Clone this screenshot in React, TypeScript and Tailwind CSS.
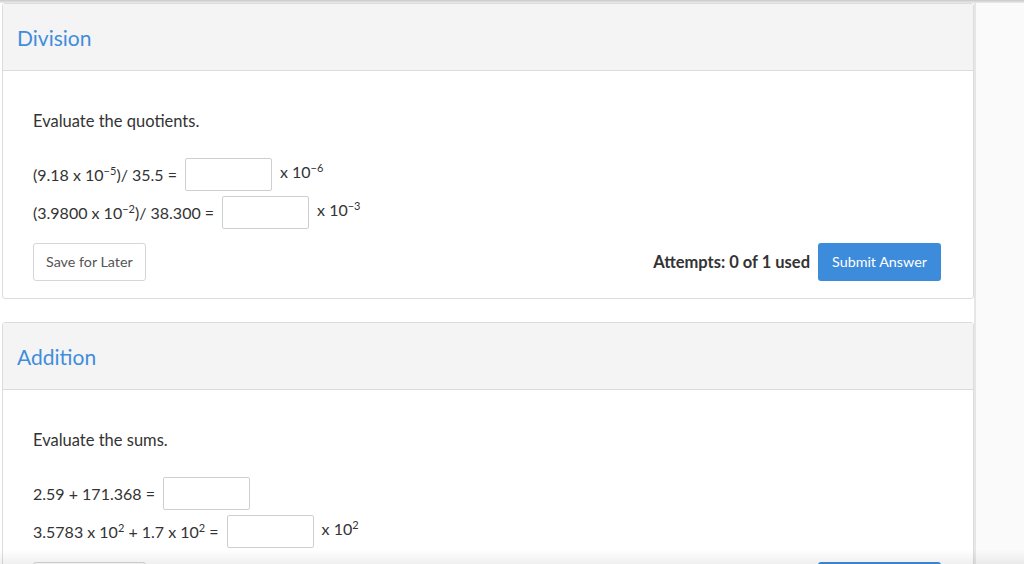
import React from 'react';

type Row = { label: React.ReactNode; unit?: React.ReactNode };

function Sup({ children }: { children: React.ReactNode }) {
  return <sup className="relative -top-[6px] text-[11px] leading-none">{children}</sup>;
}

function Question({ title, prompt, rows }: { title: string; prompt: string; rows: Row[] }) {
  return (
    <section className="ml-[2px] rounded-[3px] border border-[#dcdcdc] bg-white">
      <header className="flex h-[67px] items-center border-b border-[#dcdcdc] bg-[#f4f4f4] px-[14px]">
        <h2 className="mt-[1px] text-[21px] text-[#3f8ddc]">{title}</h2>
      </header>
      <div className="pb-[17px] pl-[30px] pr-[32px] pt-[40px]">
        <p className="text-[16.5px] leading-[21px] text-[#333]">{prompt}</p>
        <div className="mt-[26px] flex flex-col gap-[5px]">
          {rows.map((r, i) => (
            <div key={i} className="flex h-[33px] items-center text-[16px] text-[#333]">
              <span>{r.label}</span>
              <input
                type="text"
                className="ml-[8px] h-[33px] w-[87px] rounded-[2px] border border-[#cfcfcf] bg-white outline-none"
              />
              {r.unit && <span className="ml-[8px] -mt-[5px]">{r.unit}</span>}
            </div>
          ))}
        </div>
        <div className="mt-[14px] flex items-center justify-between">
          <button className="h-[38px] rounded-[3px] border border-[#d6d6d6] bg-white px-[12px] text-[14.3px] text-[#555]">
            Save for Later
          </button>
          <div className="flex items-center gap-[8px]">
            <span className="text-[16.5px] font-bold text-[#333]">Attempts: 0 of 1 used</span>
            <button className="h-[38px] w-[123px] rounded-[3px] bg-[#3d8bdb] text-[14.3px] text-white">
              Submit Answer
            </button>
          </div>
        </div>
      </div>
    </section>
  );
}

export default function App() {
  return (
    <div className="relative h-[564px] overflow-hidden bg-white font-['Lato','Open_Sans',sans-serif]">
      <div className="h-[3px] bg-gradient-to-b from-[#c8c8c8] to-[#ececec]" />
      <div className="flex">
        <main className="flex w-[974px] flex-col gap-[23px]">
          <Question
            title="Division"
            prompt="Evaluate the quotients."
            rows={[
              {
                label: (
                  <>
                    (9.18 x 10<Sup>−5</Sup>)/ 35.5 =
                  </>
                ),
                unit: (
                  <>
                    x 10<Sup>−6</Sup>
                  </>
                ),
              },
              {
                label: (
                  <>
                    (3.9800 x 10<Sup>−2</Sup>)/ 38.300 =
                  </>
                ),
                unit: (
                  <>
                    x 10<Sup>−3</Sup>
                  </>
                ),
              },
            ]}
          />
          <Question
            title="Addition"
            prompt="Evaluate the sums."
            rows={[
              { label: <>2.59 + 171.368 =</> },
              {
                label: (
                  <>
                    3.5783 x 10<Sup>2</Sup> + 1.7 x 10<Sup>2</Sup> =
                  </>
                ),
                unit: (
                  <>
                    x 10<Sup>2</Sup>
                  </>
                ),
              },
            ]}
          />
        </main>
        <aside className="h-[561px] flex-1 border-l-2 border-[#e6e6e6] bg-[#fafafa]" />
      </div>
      <div className="pointer-events-none absolute bottom-0 left-0 right-0 h-[14px] bg-gradient-to-b from-transparent to-[#00000010]" />
    </div>
  );
}
